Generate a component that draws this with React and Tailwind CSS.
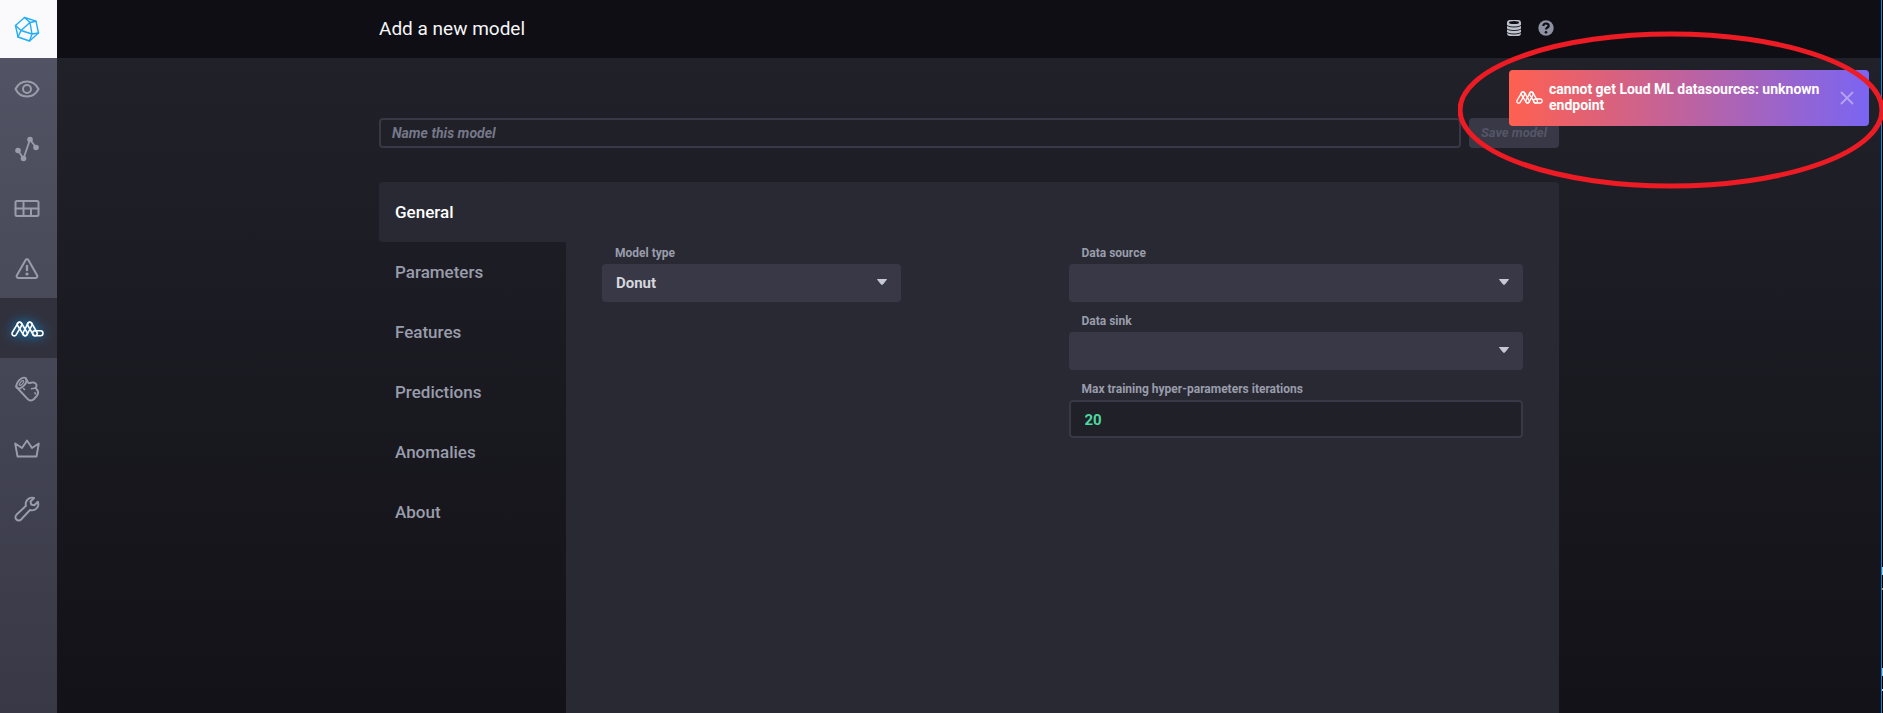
import { useState } from 'react';
import clsx from 'clsx';

const stroke = {
  fill: 'none',
  stroke: 'currentColor',
  strokeLinecap: 'round',
  strokeLinejoin: 'round',
};

function LogoIcon() {
  return (
    <svg width="26" height="26" viewBox="0 0 26 26" strokeWidth="1.4" aria-hidden="true" {...stroke}>
      <path d="M10.500 1.500 22 5.200 24.500 17 15.500 25 4 21 1.500 9.500Z" />
      <path d="M10.500 1.500 16 6.500 22 5.200M16 6.500 7 14.500 1.500 9.500M16 6.500 18 18 24.500 17M18 18 15.500 25M18 18 7 14.500 4 21" />
    </svg>
  );
}

function EyeIcon() {
  return (
    <svg width="26" height="26" viewBox="0 0 26 26" strokeWidth="2" aria-hidden="true" {...stroke}>
      <path d="M1.500 13C4 8 8 5.500 13 5.500S22 8 24.500 13C22 18 18 20.500 13 20.500S4 18 1.500 13Z" />
      <circle cx="13" cy="13" r="4" />
    </svg>
  );
}

function GraphIcon() {
  return (
    <svg width="26" height="26" viewBox="0 0 26 26" strokeWidth="1.8" aria-hidden="true" {...stroke}>
      <path d="M4 14.500 9.500 22.500 16 3.500 22 11.500" />
      <g fill="currentColor" stroke="none">
        <circle cx="4" cy="14.500" r="2.800" />
        <circle cx="9.500" cy="22.500" r="2.800" />
        <circle cx="16" cy="3.500" r="2.800" />
        <circle cx="22" cy="11.500" r="2.800" />
      </g>
    </svg>
  );
}

function DashboardIcon() {
  return (
    <svg width="26" height="26" viewBox="0 0 26 26" strokeWidth="2" aria-hidden="true" {...stroke}>
      <rect x="1.500" y="5" width="23" height="15" rx="1.500" />
      <path d="M1.500 12.500h23M9.500 5v15M17 12.500v7.500" />
    </svg>
  );
}

function AlertIcon() {
  return (
    <svg width="26" height="26" viewBox="0 0 26 26" strokeWidth="2" aria-hidden="true" {...stroke}>
      <path d="M11.600 4a1.600 1.600 0 0 1 2.800 0l8.800 15.500a1.600 1.600 0 0 1-1.400 2.400H4.200a1.600 1.600 0 0 1-1.400-2.400Z" />
      <path d="M13 9.800v4.400" strokeWidth="2.300" />
      <circle cx="13" cy="18" r="1.600" fill="currentColor" stroke="none" />
    </svg>
  );
}

function LoudIcon({ className }) {
  return (
    <svg viewBox="0 0 33 16" strokeWidth="1.6" aria-hidden="true" className={className} {...stroke}>
      <path d="M1.300 11.500 6.800 2.300a2.200 2.200 0 0 1 3.800 2.200L5.300 13.700a2.200 2.200 0 0 1-4-2.200Z" />
      <path d="M6.600 4.500a2.200 2.200 0 0 1 4-2.200l5.500 9.200a2.200 2.200 0 0 1-3.800 2.200Z" />
      <path d="M12.200 11.500 17 2.300a2.200 2.200 0 0 1 3.800 2.200L16 13.700a2.200 2.200 0 0 1-3.800-2.200Z" />
      <path d="M16.800 4.500a2.200 2.200 0 0 1 4-2.200l5.200 9.200a2.200 2.200 0 0 1-3.800 2.200Z" />
      <path d="M24 9.800h5.500a2.400 2.400 0 0 1 0 4.900H24a2.400 2.400 0 0 1 0-4.900Z" />
    </svg>
  );
}

function LogIcon() {
  return (
    <svg width="26" height="26" viewBox="0 0 26 26" strokeWidth="1.9" aria-hidden="true" {...stroke}>
      <ellipse cx="7.500" cy="7" rx="3.600" ry="6.500" transform="rotate(42 7.500 7)" />
      <ellipse cx="7.500" cy="7" rx="1.200" ry="3" transform="rotate(42 7.500 7)" strokeWidth="1.200" />
      <path d="M2 10.500 13.500 22.800C15.500 25 18 25 20 23L22.800 19.800C25 17 24.500 14.500 21.500 12C23.500 9.500 22.500 7 19.500 6.500 17.500 6 16.500 7.500 14.500 7L12 3" />
      <path d="M17.500 12.800 21.500 12M9.500 12.500l1 1M21 16.800l.5 1" strokeWidth="1.600" />
    </svg>
  );
}

function CrownIcon() {
  return (
    <svg width="26" height="26" viewBox="0 0 26 26" strokeWidth="1.9" aria-hidden="true" {...stroke}>
      <path d="M1.200 7.500 8 12 13 4.500 18 12 24.800 7.500 22.500 20.500H3.500Z" />
    </svg>
  );
}

function WrenchIcon() {
  return (
    <svg width="26" height="26" viewBox="0 0 26 26" strokeWidth="1.900" aria-hidden="true" {...stroke}>
      <path d="M20 2A6.300 6.300 0 0 0 12 9.800L2.400 18.800a3.300 3.300 0 0 0 4.700 4.700L16 14A6.300 6.300 0 0 0 23.900 5.800L20.300 9.300 17.200 8.500 16.500 5.500Z" />
    </svg>
  );
}

function DatabaseIcon() {
  return (
    <svg width="16" height="18" viewBox="0 0 16 18" aria-hidden="true">
      <rect x="1" y="1" width="14" height="16" rx="3" fill="currentColor" />
      <ellipse cx="8" cy="3.500" rx="5" ry="1.500" fill="#0f0e15" />
      <path
        d="M1 6.500C4 8.500 12 8.500 15 6.500M1 10C4 12 12 12 15 10M1 13.500C4 15.500 12 15.500 15 13.500"
        fill="none"
        stroke="#0f0e15"
        strokeWidth="0.900"
      />
    </svg>
  );
}

function HelpIcon() {
  return (
    <svg width="16" height="16" viewBox="0 0 16 16" aria-hidden="true">
      <circle cx="8" cy="8" r="7.700" fill="currentColor" />
      <path d="M5.300 6C5.500 2.600 10.900 2.800 10.700 6 10.500 7.600 8 7.500 8 9.600" fill="none" stroke="#0f0e15" strokeWidth="2.200" />
      <circle cx="8" cy="12.200" r="1.300" fill="#0f0e15" />
    </svg>
  );
}

const NAV_ITEMS = [
  { name: 'Host List', icon: <EyeIcon /> },
  { name: 'Explore', icon: <GraphIcon /> },
  { name: 'Dashboards', icon: <DashboardIcon /> },
  { name: 'Alerting', icon: <AlertIcon /> },
  {
    name: 'Loud ML',
    icon: <LoudIcon className="w-[33px] shrink-0 drop-shadow-[0_0_6px_#00a3ff]" />,
    active: true,
  },
  { name: 'Log Viewer', icon: <LogIcon /> },
  { name: 'Admin', icon: <CrownIcon /> },
  { name: 'Configuration', icon: <WrenchIcon /> },
];

const TABS = ['General', 'Parameters', 'Features', 'Predictions', 'Anomalies', 'About'];

function Sidebar() {
  return (
    <nav className="flex w-[57px] shrink-0 flex-col bg-linear-to-b from-[#545667] to-[#383846]">
      <a href="#home" aria-label="Home" className="flex h-[58px] items-center justify-center bg-[#fafafc] pr-[3px] text-[#22adf6]">
        <LogoIcon />
      </a>
      {NAV_ITEMS.map(({ name, icon, active }) => (
        <a
          key={name}
          href="#nav"
          aria-label={name}
          className={clsx(
            'flex h-[60px] items-center justify-center pt-0.5 pr-[3px]',
            active ? 'bg-[#31313d] text-white' : 'text-[#999dab]'
          )}
        >
          {icon}
        </a>
      ))}
    </nav>
  );
}

function Field({ id, label, children }) {
  return (
    <div className="flex flex-col">
      <label htmlFor={id} className="px-[13px] py-0.5 text-xs leading-[18px] font-bold text-[#999dab]">
        {label}
      </label>
      {children}
    </div>
  );
}

function Dropdown({ id, options }) {
  return (
    <div className="relative">
      <select
        id={id}
        className="h-[38px] w-full appearance-none rounded bg-[#383846] px-3.5 text-[15px] font-bold text-[#d4d7dd]"
      >
        {options.map(o => <option key={o}>{o}</option>)}
      </select>
      <svg
        width="12"
        height="8"
        viewBox="0 0 12 8"
        aria-hidden="true"
        className="pointer-events-none absolute top-[14px] right-[13px] text-[#c6cad3]"
      >
        <path d="M1.500 1.500h9L6.800 6a1 1 0 0 1-1.600 0Z" fill="currentColor" stroke="currentColor" strokeLinejoin="round" />
      </svg>
    </div>
  );
}

function Notification({ onClose }) {
  return (
    <div
      role="alert"
      className="absolute top-[70px] right-[14px] flex h-14 w-[360px] items-center rounded bg-linear-to-r/srgb from-[#ff6050] to-[#7a65f2] pr-[13px] pl-[7px] text-white"
    >
      <LoudIcon className="w-[27px] shrink-0" />
      <p className="flex-1 pb-0.5 pl-[6px] text-sm leading-4 font-bold">
        cannot get Loud ML datasources: unknown endpoint
      </p>
      <button type="button" aria-label="Dismiss" onClick={onClose} className="flex size-[18px] items-center justify-center text-white/40">
        <svg width="14" height="14" viewBox="0 0 14 14" strokeWidth="1.800" aria-hidden="true" {...stroke}>
          <path d="m1.500 1.500 11 11M12.500 1.500l-11 11" />
        </svg>
      </button>
    </div>
  );
}

export default function App() {
  const [tab, setTab] = useState('General');
  const [name, setName] = useState('');
  const [iterations, setIterations] = useState('20');
  const [showAlert, setShowAlert] = useState(true);

  return (
    <div className="relative flex min-h-screen overflow-hidden bg-[#131218] font-[Roboto,sans-serif]">
      <Sidebar />

      <div className="flex min-w-0 flex-1 flex-col bg-linear-to-b from-[#22222b] to-[#131218]">
        <header className="h-[58px] bg-[#0f0e15]">
          <div className="mx-auto flex h-full max-w-[1180px] items-center justify-between">
            <h1 className="text-[19px] text-[#f6f6f8]">Add a new model</h1>
            <div className="flex items-center gap-4 pr-[5px] pb-0.5">
              <button type="button" aria-label="Sources" className="text-[#bec2cc]"><DatabaseIcon /></button>
              <button type="button" aria-label="Help" className="text-[#8e91a1]"><HelpIcon /></button>
            </div>
          </div>
        </header>

        <main className="mx-auto flex w-full max-w-[1180px] flex-1 flex-col pt-[60px]">
          <div className="flex gap-2">
            <input
              type="text"
              aria-label="Model name"
              placeholder="Name this model"
              value={name}
              onChange={e => setName(e.target.value)}
              className="h-[30px] flex-1 rounded border-2 border-[#383846] bg-[#202028] px-[11px] text-sm font-bold text-[#bec2cc] placeholder:text-[#757888] placeholder:italic"
            />
            <button
              type="button"
              disabled={!name}
              className="h-[30px] w-[90px] rounded bg-[#383846] text-[13px] font-bold whitespace-nowrap text-[#545667] italic"
            >
              Save model
            </button>
          </div>

          <div className="mt-[34px] flex flex-1">
            <div role="tablist" className="flex w-[187px] shrink-0 flex-col">
              {TABS.map(t => (
                <button
                  key={t}
                  type="button"
                  role="tab"
                  aria-selected={t === tab}
                  onClick={() => setTab(t)}
                  className={clsx(
                    'h-[60px] rounded-l px-4 pt-0.5 text-left text-[17px] font-medium',
                    t === tab ? 'bg-[#292933] text-white' : 'text-[#999dab]'
                  )}
                >
                  {t}
                </button>
              ))}
            </div>

            <section className="grid flex-1 grid-cols-12 content-start gap-x-3 rounded-tr bg-[#292933] px-9 pt-[60px]">
              <div className="col-span-4">
                <Field id="model-type" label="Model type">
                  <Dropdown id="model-type" options={['Donut']} />
                </Field>
              </div>
              <div className="col-span-6 col-start-7 flex flex-col gap-2">
                <Field id="data-source" label="Data source">
                  <Dropdown id="data-source" options={['']} />
                </Field>
                <Field id="data-sink" label="Data sink">
                  <Dropdown id="data-sink" options={['']} />
                </Field>
                <Field id="max-iterations" label="Max training hyper-parameters iterations">
                  <input
                    id="max-iterations"
                    type="text"
                    value={iterations}
                    onChange={e => setIterations(e.target.value)}
                    className="h-[38px] rounded border-2 border-[#383846] bg-[#202028] px-3.5 pt-0.5 text-[15px] font-bold text-[#4ed8a0]"
                  />
                </Field>
              </div>
            </section>
          </div>
        </main>
      </div>

      {/* window frame, with a sliver of what lies behind it */}
      <div className="flex w-0.5 shrink-0 flex-col items-end border-l border-[#1583d8] bg-black pt-[567px]">
        <span className="h-2 w-px bg-[#8fd3ea]" />
        <span className="mt-[13px] h-0.5 w-px bg-[#b59a80]" />
        <span className="mt-[78px] h-2 w-px bg-[#8fd3ea]" />
        <span className="mt-[13px] h-0.5 w-px bg-[#b5d8e0]" />
      </div>

      {showAlert && <Notification onClose={() => setShowAlert(false)} />}

      <svg
        width="426"
        height="158"
        viewBox="0 0 426 158"
        aria-hidden="true"
        className="pointer-events-none absolute top-[31px] -right-px"
      >
        <ellipse cx="213" cy="79" rx="211" ry="76" fill="none" stroke="#ed1c24" strokeWidth="5" />
      </svg>
    </div>
  );
}
